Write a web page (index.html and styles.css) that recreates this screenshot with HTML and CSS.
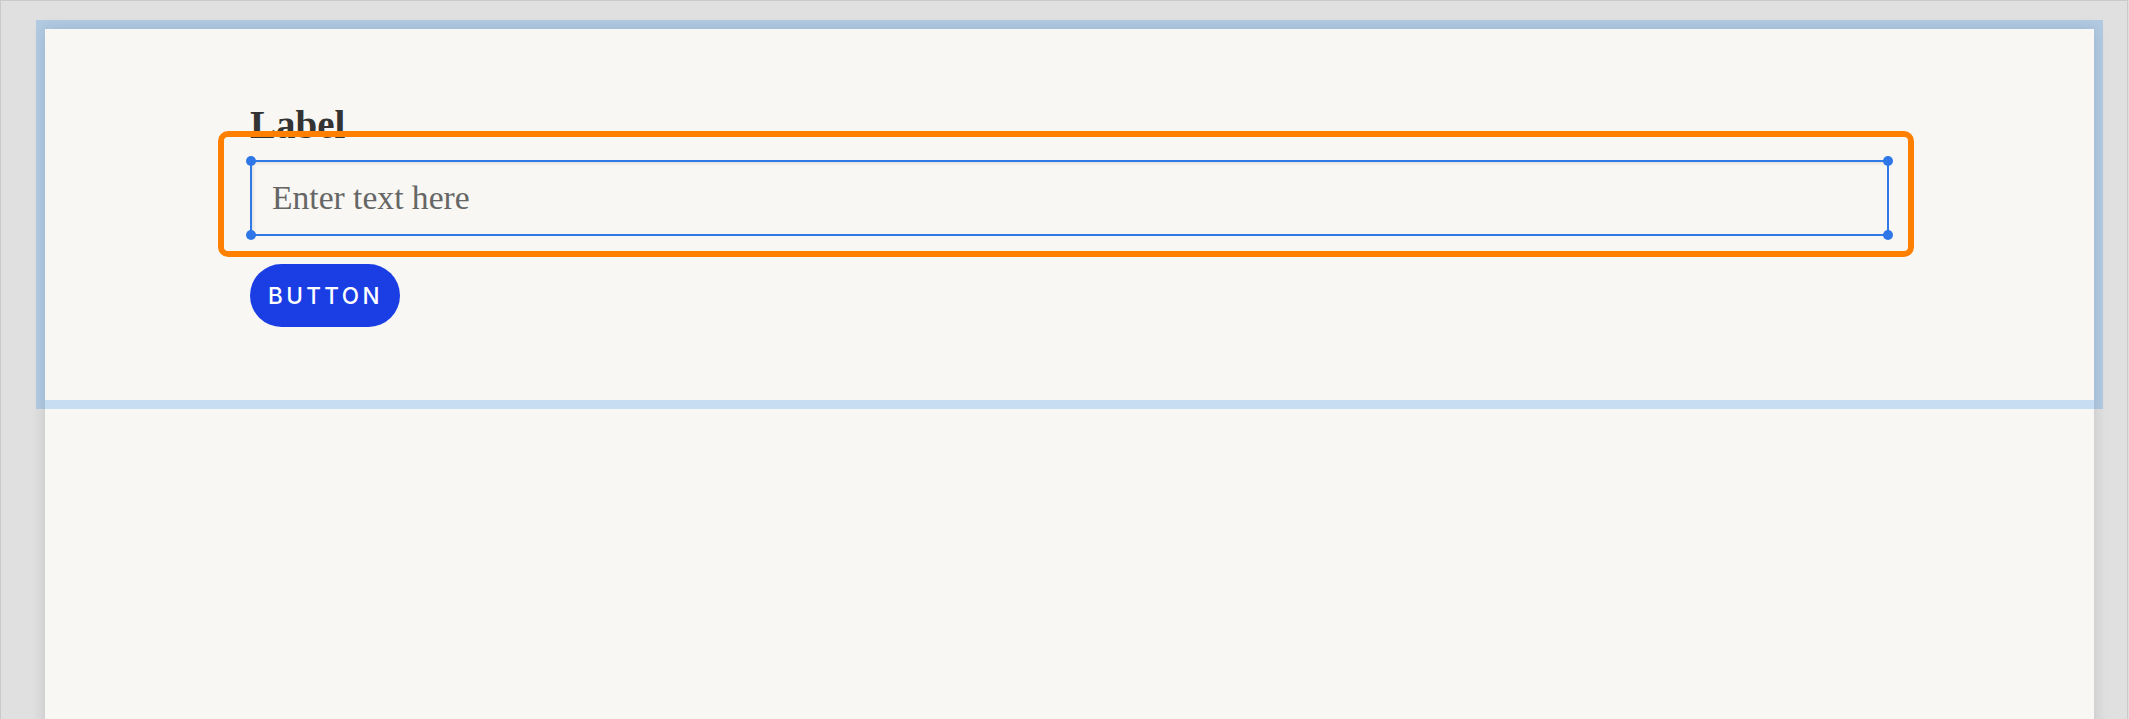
FILE: index.html
```html
<!DOCTYPE html>
<html lang="en">
<head>
<meta charset="utf-8">
<title>Form preview</title>
<link rel="stylesheet" href="styles.css">
</head>
<body>
<div class="window">
  <div class="page">
    <section class="section">
      <form class="form">
        <label class="label" for="field-input">Label</label>
        <div class="field">
          <input class="input" id="field-input" type="text" placeholder="Enter text here">
          <span class="handle handle-tl"></span>
          <span class="handle handle-tr"></span>
          <span class="handle handle-bl"></span>
          <span class="handle handle-br"></span>
          <span class="focus-ring"></span>
        </div>
        <button class="btn" type="button">Button</button>
      </form>
    </section>
  </div>
</div>
</body>
</html>
```

FILE: styles.css
```css
* { box-sizing: border-box; }

html, body {
  margin: 0;
  padding: 0;
  height: 100%;
}

body {
  background: #e0e0e0;
  overflow: hidden;
}

.window {
  width: 2128px;
  height: 719px;
  border: 1px solid #cacaca;
  border-bottom: none;
  background: #e0e0e0;
  padding: 28px 33px 0 44px;
  overflow: hidden;
}

.page {
  background: #f8f7f4;
  min-height: 800px;
  box-shadow: 0 0 14px rgba(0, 0, 0, 0.13);
}

.section {
  height: 371px;
  padding: 74px 205px 0;
  outline: 9px solid rgba(0, 120, 235, 0.2);
  position: relative;
}

.form {
  display: flex;
  flex-direction: column;
  align-items: flex-start;
}

.label {
  font-family: "Liberation Serif", "Times New Roman", serif;
  font-weight: 700;
  font-size: 39px;
  line-height: 44px;
  color: #333333;
}

.field {
  position: relative;
  width: 100%;
  margin-top: 13px;
}

.input {
  display: block;
  width: 100%;
  height: 76px;
  margin: 0;
  padding: 0 20px;
  border: 2px solid #3079e6;
  border-radius: 0;
  background: #f8f7f4;
  box-shadow: inset 2px 2px 3px rgba(0, 0, 0, 0.08);
  font-family: "Liberation Serif", "Times New Roman", serif;
  font-size: 33.6px;
  color: #333333;
  outline: none;
}

.input::placeholder {
  color: #666666;
  opacity: 1;
}

.handle {
  position: absolute;
  width: 10px;
  height: 10px;
  border-radius: 50%;
  background: #2f77e8;
  pointer-events: none;
}

.handle-tl { left: -4px; top: -4px; }
.handle-tr { right: -4px; top: -4px; }
.handle-bl { left: -4px; bottom: -4px; }
.handle-br { right: -4px; bottom: -4px; }

.focus-ring {
  position: absolute;
  left: -32px;
  top: -29px;
  right: -25px;
  bottom: -21px;
  border: 6px solid #ff8000;
  border-radius: 10px;
  pointer-events: none;
}

.btn {
  margin-top: 28px;
  height: 63px;
  padding: 0 17px 0 18px;
  border: none;
  border-radius: 32px;
  background: #1a3ee3;
  color: #ffffff;
  font-family: Inter, "Noto Sans", sans-serif;
  font-size: 22.5px;
  font-weight: 500;
  letter-spacing: 3.4px;
  text-transform: uppercase;
  cursor: pointer;
}
```
